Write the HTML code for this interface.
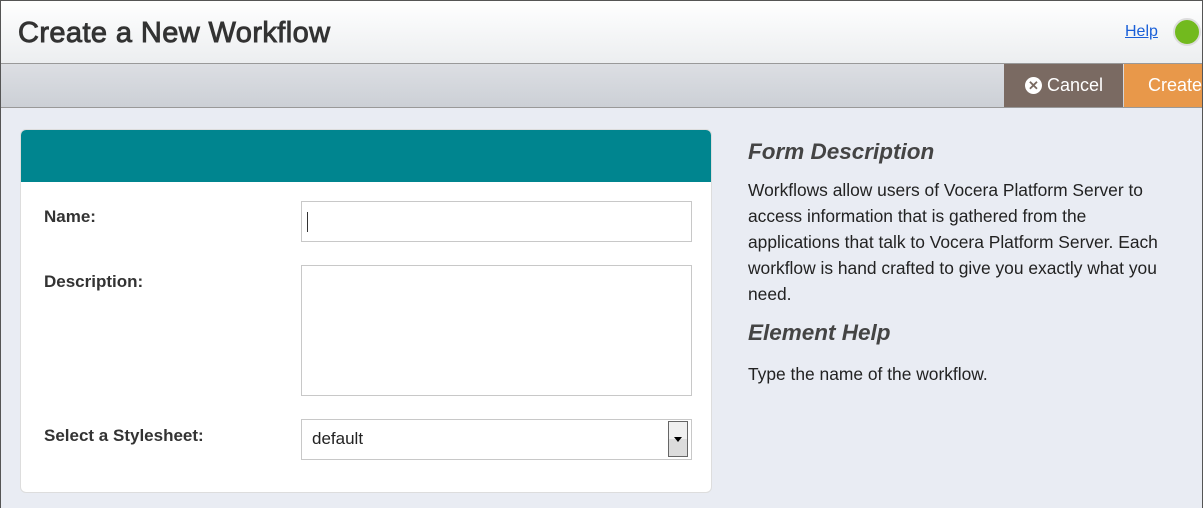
<!DOCTYPE html><html><head><style>
body{margin:0;width:1203px;height:508px;overflow:hidden;font-family:"Liberation Sans",sans-serif;background:#e9ecf3;position:relative}
.frame{position:absolute;inset:0;border:1px solid #555;border-bottom:0;box-sizing:border-box;pointer-events:none}
.hd{position:absolute;left:0;top:0;width:1203px;height:63px;background:linear-gradient(#fff,#eceef0);border-bottom:1px solid #999}
.hd h1{margin:0;position:absolute;left:18px;top:17px;font-size:29px;font-weight:normal;color:#333;letter-spacing:0.4px;-webkit-text-stroke:0.9px #333}
.help{position:absolute;left:1125px;top:23px;font-size:16px;color:#1a5fd8;text-decoration:underline}
.dot{position:absolute;left:1173px;top:18px;width:24px;height:24px;border-radius:50%;background:#72ba1e;border:2px solid #ddd;box-sizing:content-box}
.bar{position:absolute;left:0;top:64px;width:1203px;height:43px;background:linear-gradient(#dcdee3,#ccd0d6);border-bottom:1px solid #999}
.cancel{position:absolute;left:1004px;top:64px;width:119px;height:43px;background:#7a6a62;color:#fff;font-size:18px;line-height:43px}
.cancel i{position:absolute;left:21px;top:13px;width:17px;height:17px;border-radius:50%;background:#fff;color:#7a6a62;font-style:normal;font-weight:bold;font-size:13px;line-height:17px;text-align:center}
.cancel span{position:absolute;left:43px}
.create{position:absolute;left:1124px;top:64px;width:79px;height:43px;background:#e8984a;color:#fff;font-size:18px;line-height:43px;padding-left:24px;box-sizing:border-box}
.card{position:absolute;left:20px;top:129px;width:692px;height:364px;background:#fff;border-radius:6px;border:1px solid #ddd;box-sizing:border-box;overflow:hidden}
.card .t{height:52px;background:#00858f}
.lbl{position:absolute;left:44px;font-size:17px;font-weight:bold;color:#333}
.in{position:absolute;left:301px;width:391px;border:1px solid #c8c8c8;box-sizing:border-box;background:#fff}
.sel{font-size:17px;color:#222;line-height:38px;padding-left:10px}
.arr{position:absolute;right:3px;top:1px;width:20px;height:36px;border:1px solid #666;background:linear-gradient(#f0f0f0 50%,#dcdcdc 50%);box-sizing:border-box}
.arr:after{content:"";position:absolute;left:5px;top:15px;border:4px solid transparent;border-top:5px solid #000}
.side{position:absolute;left:748px;width:432px;color:#222;font-size:17.4px;line-height:26px}
.side h2{margin:0;font-size:22.5px;font-style:italic;font-weight:bold;color:#444}
</style></head><body>
<div class="hd"><h1>Create a New Workflow</h1><span class="help">Help</span><span class="dot"></span></div>
<div class="bar"></div>
<div class="cancel"><i>✕</i><span>Cancel</span></div>
<div class="create">Create</div>
<div class="card"><div class="t"></div></div>
<div class="lbl" style="top:207px">Name:</div>
<div class="lbl" style="top:272px">Description:</div>
<div class="lbl" style="top:426px">Select a Stylesheet:</div>
<div class="in" style="top:201px;height:41px"><div style="position:absolute;left:5px;top:10px;width:1px;height:20px;background:#333"></div></div>
<div class="in" style="top:265px;height:131px"></div>
<div class="in sel" style="top:419px;height:41px">default<div class="arr"></div></div>
<div class="side" style="top:139px"><h2>Form Description</h2></div>
<div class="side" style="top:177px">Workflows allow users of Vocera Platform Server to access information that is gathered from the applications that talk to Vocera Platform Server. Each workflow is hand crafted to give you exactly what you need.</div>
<div class="side" style="top:320px"><h2>Element Help</h2></div>
<div class="side" style="top:361px">Type the name of the workflow.</div>
<div class="frame"></div>
</body></html>
